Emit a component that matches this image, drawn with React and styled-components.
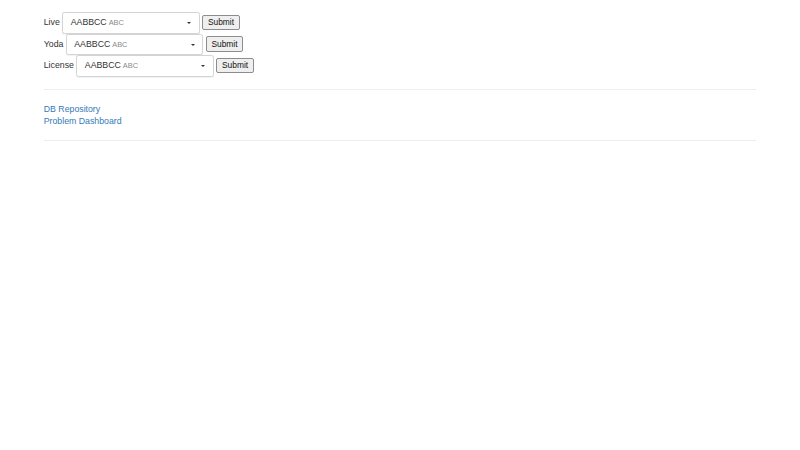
import React from 'react';
import styled, { createGlobalStyle } from 'styled-components';

const servers = [
  { label: 'Live', value: 'AABBCC', sub: 'ABC' },
  { label: 'Yoda', value: 'AABBCC', sub: 'ABC' },
  { label: 'License', value: 'AABBCC', sub: 'ABC' },
];

const links = ['DB Repository', 'Problem Dashboard'];

export default function App() {
  return (
    <>
      <GlobalStyle />
      <Container>
        <Forms>
          {servers.map((s) => (
            <Row key={s.label}>
              <Label>{s.label}</Label>
              <Picker>
                <PickerText>
                  {s.value}
                  <Sub>{s.sub}</Sub>
                </PickerText>
                <Caret />
              </Picker>
              <SubmitButton type="button">Submit</SubmitButton>
            </Row>
          ))}
        </Forms>
        <Rule />
        <Links>
          {links.map((l) => (
            <Link key={l} href="#">
              {l}
            </Link>
          ))}
        </Links>
        <Rule />
      </Container>
    </>
  );
}

const GlobalStyle = createGlobalStyle`
  html, body {
    margin: 0;
    padding: 0;
    background: #fff;
  }
  body {
    font-family: "Liberation Sans", Arial, sans-serif;
    font-size: 8.75px;
    line-height: 12.5px;
    color: #333;
  }
`;

const Container = styled.div`
  width: 712.5px;
  margin: 0 auto;
  padding-top: 12.3px;
`;

const Forms = styled.div`
  display: flex;
  flex-direction: column;
`;

const Row = styled.div`
  display: flex;
  align-items: baseline;
  gap: 2.4px;
  height: 21.5px;
`;

const Label = styled.span`
  color: #333;
`;

const Picker = styled.div`
  box-sizing: border-box;
  width: 137.5px;
  height: 21.5px;
  padding: 0 7.5px;
  display: flex;
  align-items: center;
  justify-content: space-between;
  background: #fff;
  border: 1px solid #d4d4d4;
  border-radius: 2.5px;
  box-shadow: 0 0.6px 1px rgba(0, 0, 0, 0.06);
`;

const PickerText = styled.span`
  color: #333;
  white-space: nowrap;
`;

const Sub = styled.small`
  font-size: 7.4px;
  color: #8a8a8a;
  margin-left: 2px;
`;

const Caret = styled.span`
  width: 0;
  height: 0;
  border-top: 2.6px solid #333;
  border-left: 2.6px solid transparent;
  border-right: 2.6px solid transparent;
`;

const SubmitButton = styled.button`
  font-family: "Liberation Sans", Arial, sans-serif;
  font-size: 8.4px;
  line-height: 10px;
  height: 15.5px;
  padding: 0 4.8px;
  color: #111;
  background: #efefef;
  border: 1px solid #8d8d8d;
  border-radius: 2px;
`;

const Rule = styled.hr`
  margin: 12.5px 0;
  border: 0;
  border-top: 1px solid #eee;
`;

const Links = styled.div`
  display: flex;
  flex-direction: column;
`;

const Link = styled.a`
  color: #337ab7;
  text-decoration: none;
  line-height: 12.5px;
`;
